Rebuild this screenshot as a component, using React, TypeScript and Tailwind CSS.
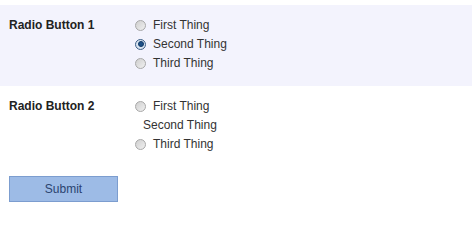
import React from 'react'

type Option = { label: string; radio: boolean; checked?: boolean }

const groups: { title: string; shaded: boolean; options: Option[] }[] = [
  {
    title: 'Radio Button 1',
    shaded: true,
    options: [
      { label: 'First Thing', radio: true },
      { label: 'Second Thing', radio: true, checked: true },
      { label: 'Third Thing', radio: true },
    ],
  },
  {
    title: 'Radio Button 2',
    shaded: false,
    options: [
      { label: 'First Thing', radio: true },
      { label: 'Second Thing', radio: false },
      { label: 'Third Thing', radio: true },
    ],
  },
]

function Radio({ checked }: { checked?: boolean }) {
  if (checked) {
    return (
      <span className="w-[11px] h-[11px] rounded-full border border-[#3f6088] bg-[#d8e3ef] flex items-center justify-center shrink-0">
        <span className="w-[6px] h-[6px] rounded-full bg-[#1d4f86] border border-[#0f3a6a]" />
      </span>
    )
  }
  return (
    <span className="w-[11px] h-[11px] rounded-full border border-[#a8a8a8] bg-gradient-to-br from-[#cfcfcf] to-[#f0f0f0] shrink-0" />
  )
}

export default function App() {
  return (
    <div className="w-[474px] h-[229px] bg-white pt-[5px] font-['Liberation_Sans',Arial,sans-serif] text-[12px]">
      {groups.map(group => (
        <div
          key={group.title}
          className={
            group.shaded
              ? 'w-[472px] h-[81px] bg-[#f3f3fd] flex pt-[10.5px]'
              : 'w-[472px] h-[82px] bg-white flex pt-[10.5px]'
          }
        >
          <div className="w-[135px] pl-[9px] font-bold text-[#222] leading-[19.3px]">
            {group.title}
          </div>
          <div className="flex flex-col">
            {group.options.map(opt => (
              <div key={opt.label} className="flex items-center h-[19.3px] leading-[19.3px] text-[#333]">
                {opt.radio ? (
                  <>
                    <Radio checked={opt.checked} />
                    <span className="ml-[7px]">{opt.label}</span>
                  </>
                ) : (
                  <span className="ml-[8px]">{opt.label}</span>
                )}
              </div>
            ))}
          </div>
        </div>
      ))}
      <div className="pl-[9px] pt-[8px]">
        <button className="w-[109px] h-[26px] bg-[#9dbbe6] border border-[#7c9dcf] text-[#2b4470] text-[12px]">
          Submit
        </button>
      </div>
    </div>
  )
}
